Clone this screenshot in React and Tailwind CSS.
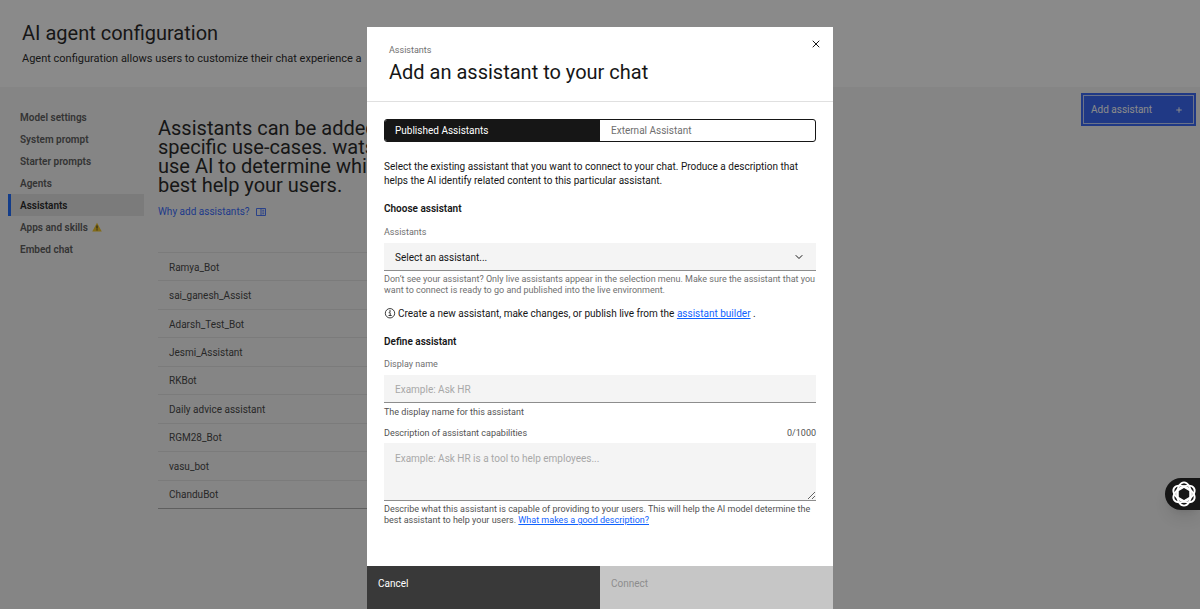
import React, { useState } from "react";
import { ChevronDown, Plus, X } from "lucide-react";

const NAV_ITEMS = [
  { label: "Model settings" },
  { label: "System prompt" },
  { label: "Starter prompts" },
  { label: "Agents" },
  { label: "Assistants", active: true },
  { label: "Apps and skills", warning: true },
  { label: "Embed chat" },
];

const ASSISTANTS = [
  "Ramya_Bot",
  "sai_ganesh_Assist",
  "Adarsh_Test_Bot",
  "Jesmi_Assistant",
  "RKBot",
  "Daily advice assistant",
  "RGM28_Bot",
  "vasu_bot",
  "ChanduBot",
];

const MAX_DESCRIPTION = 1000;

const WarningIcon = () => (
  <svg viewBox="0 0 16 16" className="w-[10px] h-[10px]" aria-hidden="true">
    <path d="M8 1 L15.6 15 H0.4 Z" fill="#f1c21b" />
    <path d="M8 5.5 V10.5 M8 11.8 V13.4" stroke="#161616" strokeWidth="1.6" />
  </svg>
);

const BookIcon = () => (
  <svg viewBox="0 0 20 16" className="w-[10px] h-2" fill="none" stroke="currentColor" strokeWidth="1.8" aria-hidden="true">
    <path d="M1 1 H19 V15 H1 Z M10 1 V15 M12.5 4.5 H16.5 M12.5 8 H16.5 M12.5 11.5 H16.5" />
  </svg>
);

const InfoIcon = () => (
  <svg viewBox="0 0 32 32" className="w-3 h-3 shrink-0" fill="none" stroke="#161616" strokeWidth="2.2" aria-hidden="true">
    <circle cx="16" cy="14" r="12.5" />
    <path d="M12.5 12.5 H16.5 V20 M12 20 H20.5" />
    <circle cx="16" cy="8" r="1" fill="#161616" />
  </svg>
);

const KnotIcon = () => (
  <svg viewBox="0 0 26 26" className="w-[26px] h-[26px]" fill="none" stroke="#ffffff" strokeWidth="1.9" aria-hidden="true">
    <ellipse cx="13" cy="13" rx="11.6" ry="7" transform="rotate(90 13 13)" />
    <ellipse cx="13" cy="13" rx="11.6" ry="7" transform="rotate(30 13 13)" />
    <ellipse cx="13" cy="13" rx="11.6" ry="7" transform="rotate(150 13 13)" />
    <path d="M13 6.2 L18.9 9.6 V16.4 L13 19.8 L7.1 16.4 V9.6 Z" strokeWidth="1.3" />
  </svg>
);

const AgentPage = () => (
  <div className="min-h-screen bg-[#f4f4f4]">

    {/* HEADER */}
    <header className="bg-white h-[87px] pl-[22px] pt-[21px]">
      <h1 className="text-[20px] leading-6">AI agent configuration</h1>
      <p className="mt-2 text-[11px] leading-3 whitespace-nowrap">
        Agent configuration allows users to customize their chat experience a
      </p>
    </header>

    <div className="flex items-start">

      {/* SIDE NAV */}
      <nav className="w-[136px] ml-2 mt-[19px] shrink-0">
        {NAV_ITEMS.map(item => (
          <a
            key={item.label}
            href="#"
            className={
              item.active
                ? "flex items-center gap-1 h-[22px] pl-[9px] text-[10px] font-semibold border-l-3 border-[#0f62fe] bg-[#e0e0e0] text-[#161616]"
                : "flex items-center gap-1 h-[22px] pl-[9px] text-[10px] font-semibold border-l-3 border-transparent text-[#525252]"
            }
          >
            {item.label}
            {item.warning && <WarningIcon />}
          </a>
        ))}
      </nav>

      {/* MAIN CONTENT */}
      <main className="flex-1 ml-[14px] mt-8 max-w-[560px]">
        <h2 className="text-[20px] leading-[19px] whitespace-nowrap">
          Assistants can be added<br />
          specific use-cases. watsonx<br />
          use AI to determine which<br />
          best help your users.
        </h2>
        <a href="#" className="mt-[11px] flex items-center gap-[6px] text-[10px] leading-3 text-[#2a5ffe]">
          Why add assistants?
          <BookIcon />
        </a>

        <table className="mt-[34px] w-full h-[257px] border-t border-b border-t-[#e0e0e0] border-b-[#a8a8a8] text-[10px] text-[#393939]">
          <tbody>
            {ASSISTANTS.map(name => (
              <tr key={name} className="border-b border-[#e0e0e0] last:border-b-0">
                <td className="pl-[11px] pt-px pb-0">{name}</td>
              </tr>
            ))}
          </tbody>
        </table>
      </main>

      <button className="ml-auto mr-1 mt-[6px] flex items-center justify-between w-[115px] h-[33px] pl-2 pr-[11px] border-2 border-[#2a5df5] bg-[#2a5df5] ring-1 ring-inset ring-white/70 text-white text-[10px]">
        Add assistant
        <Plus size={8} strokeWidth={3} />
      </button>
    </div>
  </div>
);

const AddAssistantModal = () => {
  const [description, setDescription] = useState("");

  return (
    <div className="fixed inset-0 flex justify-center pt-[27px] bg-[#161616]/50">
      <div role="dialog" aria-labelledby="modal-title" className="flex flex-col w-full max-w-[466px] bg-white">

        {/* MODAL HEADER */}
        <div className="flex justify-between items-start h-[75px] pl-[22px] pr-[11px] pt-[17px] border-b border-[#e0e0e0]">
          <div>
            <p className="text-[9px] leading-3 text-[#6f6f6f]">Assistants</p>
            <h2 id="modal-title" className="mt-1 text-[20px] leading-6">Add an assistant to your chat</h2>
          </div>
          <button aria-label="Close" className="-mt-[6px]">
            <X size={12} />
          </button>
        </div>

        {/* MODAL BODY */}
        <div className="flex-1 px-[17px] pt-[17px] text-[10px]">
          <div className="grid grid-cols-2 h-[23px] border border-[#161616] rounded-[3px] overflow-hidden">
            <button className="pl-[10px] text-left bg-[#161616] text-white">Published Assistants</button>
            <button className="pl-[11px] text-left text-[#6f6f6f]">External Assistant</button>
          </div>

          <p className="mt-[18px] leading-[14px]">
            Select the existing assistant that you want to connect to your chat. Produce a description that
            helps the AI identify related content to this particular assistant.
          </p>

          <h3 className="mt-[14px] leading-[14px] font-semibold">Choose assistant</h3>

          <label htmlFor="assistant" className="block mt-[10px] text-[9px] leading-3 text-[#6f6f6f]">Assistants</label>
          <div className="relative mt-[5px]">
            <select id="assistant" className="appearance-none w-full h-7 px-[11px] pt-px bg-[#f4f4f4] border-b border-[#8d8d8d]">
              <option>Select an assistant...</option>
            </select>
            <ChevronDown size={12} className="absolute right-[11px] top-2 pointer-events-none" />
          </div>
          <p className="mt-[3px] text-[9px] leading-[11px] text-[#6f6f6f]">
            Don’t see your assistant? Only live assistants appear in the selection menu. Make sure the assistant that you
            want to connect is ready to go and published into the live environment.
          </p>

          <p className="mt-[11px] flex items-center gap-[2px] leading-[14px]">
            <InfoIcon />
            <span>
              Create a new assistant, make changes, or publish live from the{" "}
              <a href="#" className="text-[#0f62fe] underline">assistant builder</a> .
            </span>
          </p>

          <h3 className="mt-[14px] leading-[14px] font-semibold">Define assistant</h3>

          <label htmlFor="display-name" className="block mt-[9px] text-[9px] leading-3 text-[#6f6f6f]">Display name</label>
          <input
            id="display-name"
            type="text"
            placeholder="Example: Ask HR"
            className="block mt-[5px] w-full h-7 px-[11px] pt-px bg-[#f4f4f4] border-b border-[#8d8d8d] placeholder:text-[#a8a8a8]"
          />
          <p className="mt-[3px] text-[9px] leading-3 text-[#525252]">The display name for this assistant</p>

          <div className="mt-[9px] flex justify-between text-[9px] leading-3 text-[#525252]">
            <label htmlFor="description">Description of assistant capabilities</label>
            <span>{description.length}/{MAX_DESCRIPTION}</span>
          </div>
          <textarea
            id="description"
            value={description}
            maxLength={MAX_DESCRIPTION}
            onChange={e => setDescription(e.target.value)}
            placeholder="Example: Ask HR is a tool to help employees..."
            className="block mt-1 w-full h-[58px] px-[11px] pt-[9px] pb-2 leading-[14px] bg-[#f4f4f4] border-b border-[#8d8d8d] placeholder:text-[#a8a8a8] resize-y"
          />
          <p className="mt-[3px] text-[9px] leading-[11px] text-[#525252]">
            Describe what this assistant is capable of providing to your users. This will help the AI model determine the
            best assistant to help your users.{" "}
            <a href="#" className="text-[#0f62fe] underline">What makes a good description?</a>
          </p>
        </div>

        {/* MODAL ACTIONS */}
        <div className="grid grid-cols-2 h-[43px] text-[10px] leading-[14px]">
          <button className="flex items-start pl-[11px] pt-[11px] bg-[#393939] text-white">Cancel</button>
          <button disabled className="flex items-start pl-[11px] pt-[11px] bg-[#c6c6c6] text-[#8d8d8d]">Connect</button>
        </div>
      </div>
    </div>
  );
};

const App = () => (
  <div className="font-[Roboto,sans-serif] text-[#161616]">
    <AgentPage />
    <AddAssistantModal />

    {/* CHAT LAUNCHER */}
    <button aria-label="Open chat" className="fixed right-0 top-[478px] w-[35px] h-8 pl-[6px] rounded-l-2xl bg-[#161616] shadow-lg">
      <KnotIcon />
    </button>
  </div>
);

export default App;
